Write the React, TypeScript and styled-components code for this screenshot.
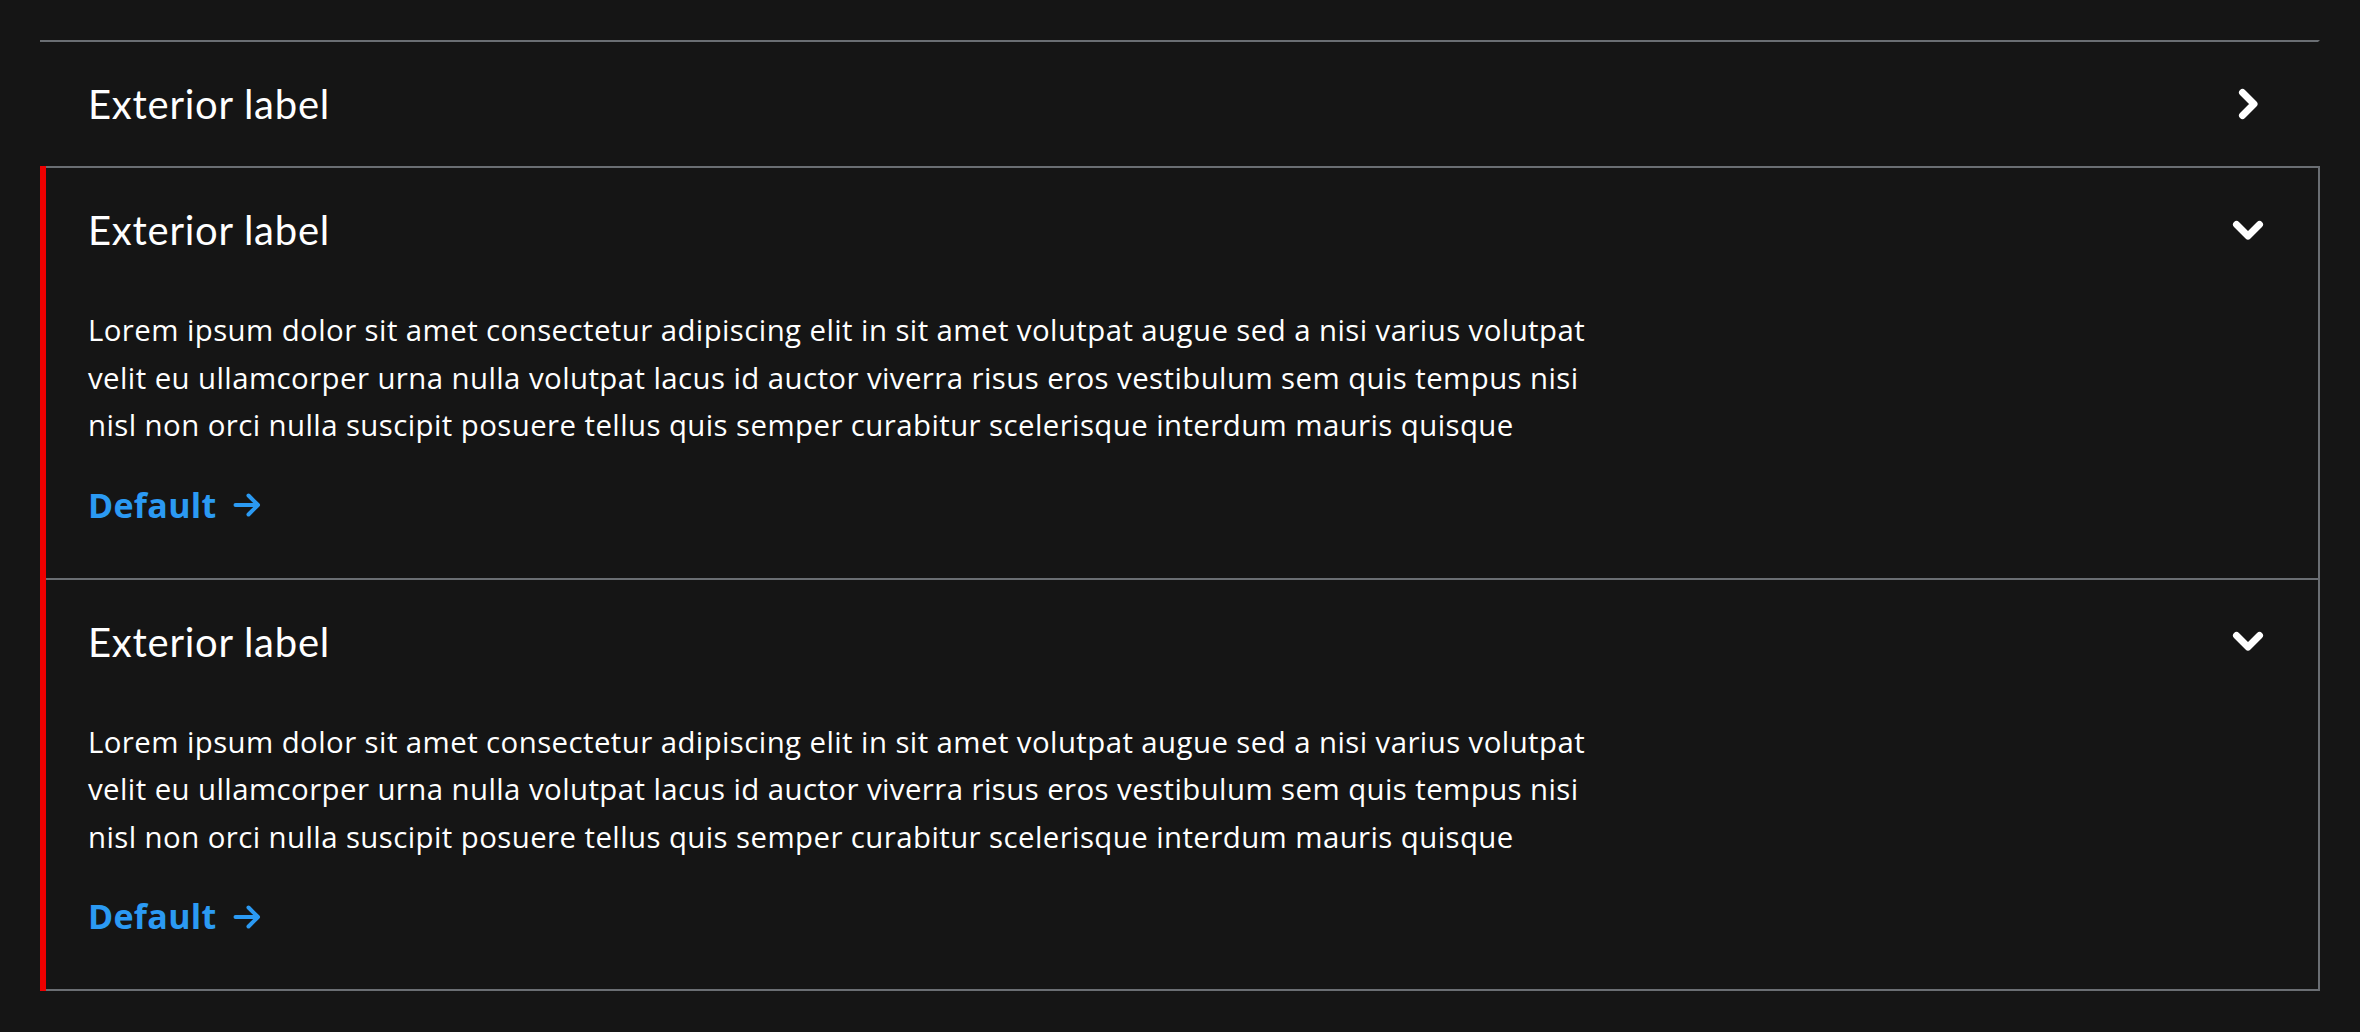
import React from "react";
import styled, { createGlobalStyle } from "styled-components";

const GlobalStyle = createGlobalStyle`
  html, body {
    margin: 0;
    padding: 0;
    background: #151515;
  }
  body {
    font-family: "Lato", "Noto Sans", sans-serif;
    color: #ffffff;
  }
  * { box-sizing: border-box; }
`;

const Page = styled.div`
  padding: 40px 40px 40px 40px;
  min-height: 1032px;
  background: #151515;
`;

const Accordion = styled.div`
  display: flex;
  flex-direction: column;
`;

const Item = styled.div<{ $expanded: boolean; $last: boolean }>`
  position: relative;
  border-top: 2px solid #6a6e73;
  border-right: 2px solid ${(p) => (p.$expanded ? "#6a6e73" : "transparent")};
  border-bottom: ${(p) => (p.$last ? "2px solid #6a6e73" : "0")};

  &::before {
    content: "";
    display: ${(p) => (p.$expanded ? "block" : "none")};
    position: absolute;
    left: 0;
    top: -2px;
    bottom: ${(p) => (p.$last ? "-2px" : "0")};
    width: 6px;
    background: #ee0000;
  }
`;

const Toggle = styled.div`
  display: flex;
  align-items: center;
  justify-content: space-between;
  height: 124px;
  padding: 0 54px 0 48px;
`;

const Title = styled.span`
  font-family: "Lato", "Noto Sans", sans-serif;
  font-size: 40px;
  line-height: 52px;
  font-weight: 400;
  letter-spacing: 0.75px;
  color: #ffffff;
`;

const IconBox = styled.span`
  display: flex;
  align-items: center;
  justify-content: center;
  width: 32px;
  height: 32px;
`;

const Content = styled.div`
  display: flex;
  flex-direction: column;
  align-items: flex-start;
  padding: 15px 54px 47px 48px;
`;

const Body = styled.p`
  margin: 0;
  font-family: "Open Sans", "Noto Sans", sans-serif;
  font-size: 29.4px;
  line-height: 47.5px;
  font-weight: 400;
  letter-spacing: 0.42px;
  color: #ffffff;
`;

const Link = styled.a`
  display: inline-flex;
  align-items: center;
  gap: 16px;
  margin-top: 30px;
  height: 51px;
  font-family: "Open Sans", "Noto Sans", sans-serif;
  font-size: 34px;
  line-height: 51px;
  font-weight: 700;
  letter-spacing: 0.3px;
  color: #2b9af3;
  text-decoration: none;
`;

const ChevronRight = () => (
  <svg width="21" height="32" viewBox="0 0 21 32" fill="none">
    <path
      d="M4.5 4.5 L16 16 L4.5 27.5"
      stroke="#ffffff"
      strokeWidth="7"
      strokeLinecap="round"
      strokeLinejoin="round"
    />
  </svg>
);

const ChevronDown = () => (
  <svg width="32" height="21" viewBox="0 0 32 21" fill="none">
    <path
      d="M4.5 4.5 L16 16 L27.5 4.5"
      stroke="#ffffff"
      strokeWidth="7"
      strokeLinecap="round"
      strokeLinejoin="round"
    />
  </svg>
);

const ArrowRight = () => (
  <svg width="28" height="24" viewBox="0 0 28 24" fill="none">
    <path
      d="M2.5 12 H25 M15.5 2.5 L25 12 L15.5 21.5"
      stroke="#2b9af3"
      strokeWidth="4"
      strokeLinecap="round"
      strokeLinejoin="round"
    />
  </svg>
);

const LINES = [
  "Lorem ipsum dolor sit amet consectetur adipiscing elit in sit amet volutpat augue sed a nisi varius volutpat",
  "velit eu ullamcorper urna nulla volutpat lacus id auctor viverra risus eros vestibulum sem quis tempus nisi",
  "nisl non orci nulla suscipit posuere tellus quis semper curabitur scelerisque interdum mauris quisque",
];

const items = [
  { label: "Exterior label", expanded: false },
  { label: "Exterior label", expanded: true },
  { label: "Exterior label", expanded: true },
];

export default function App() {
  return (
    <>
      <GlobalStyle />
      <Page>
        <Accordion>
          {items.map((it, i) => (
            <Item key={i} $expanded={it.expanded} $last={i === items.length - 1}>
              <Toggle>
                <Title>{it.label}</Title>
                <IconBox>{it.expanded ? <ChevronDown /> : <ChevronRight />}</IconBox>
              </Toggle>
              {it.expanded && (
                <Content>
                  <Body>
                    {LINES.map((l, j) => (
                      <React.Fragment key={j}>
                        {l}
                        {j < LINES.length - 1 && <br />}
                      </React.Fragment>
                    ))}
                  </Body>
                  <Link href="#">
                    Default
                    <ArrowRight />
                  </Link>
                </Content>
              )}
            </Item>
          ))}
        </Accordion>
      </Page>
    </>
  );
}
